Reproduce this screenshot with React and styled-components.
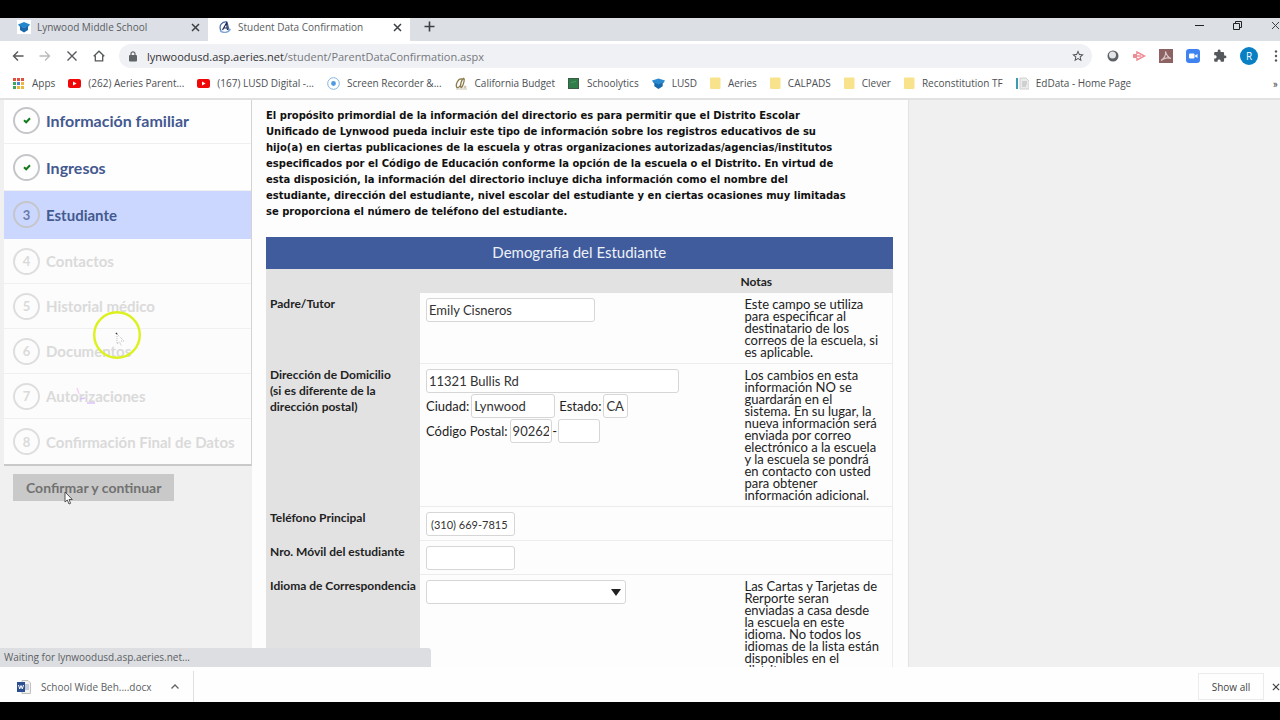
import React, { useState } from "react";
import styled, { createGlobalStyle } from "styled-components";
import { MdExtension, MdStarBorder } from "react-icons/md";

const bookmarks = [
  { icon: "apps", label: "Apps" },
  { icon: "youtube", label: "(262) Aeries Parent..." },
  { icon: "youtube", label: "(167) LUSD Digital -..." },
  { icon: "recorder", label: "Screen Recorder &..." },
  { icon: "budget", label: "California Budget" },
  { icon: "schoolytics", label: "Schoolytics" },
  { icon: "lusd", label: "LUSD" },
  { icon: "folder", label: "Aeries" },
  { icon: "folder", label: "CALPADS" },
  { icon: "folder", label: "Clever" },
  { icon: "folder", label: "Reconstitution TF" },
  { icon: "eddata", label: "EdData - Home Page" },
];

const steps = [
  { label: "Información familiar", status: "done" },
  { label: "Ingresos", status: "done" },
  { label: "Estudiante", status: "active" },
  { label: "Contactos", status: "pending" },
  { label: "Historial médico", status: "pending" },
  { label: "Documentos", status: "pending" },
  { label: "Autorizaciones", status: "pending" },
  { label: "Confirmación Final de Datos", status: "pending" },
];

const introLines = [
  "El propósito primordial de la información del directorio es para permitir que el Distrito Escolar",
  "Unificado de Lynwood pueda incluir este tipo de información sobre los registros educativos de su",
  "hijo(a) en ciertas publicaciones de la escuela y otras organizaciones autorizadas/agencias/institutos",
  "especificados por el Código de Educación conforme la opción de la escuela o el Distrito. En virtud de",
  "esta disposición, la información del directorio incluye dicha información como el nombre del",
  "estudiante, dirección del estudiante, nivel escolar del estudiante y en ciertas ocasiones muy limitadas",
  "se proporciona el número de teléfono del estudiante.",
];

const noteGuardian = [
  "Este campo se utiliza",
  "para especificar al",
  "destinatario de los",
  "correos de la escuela, si",
  "es aplicable.",
];
const noteAddress = [
  "Los cambios en esta",
  "información NO se",
  "guardarán en el",
  "sistema. En su lugar, la",
  "nueva información será",
  "enviada por correo",
  "electrónico a la escuela",
  "y la escuela se pondrá",
  "en contacto con usted",
  "para obtener",
  "información adicional.",
];
const noteLanguage = [
  "Las Cartas y Tarjetas de",
  "Rerporte seran",
  "enviadas a casa desde",
  "la escuela en este",
  "idioma. No todos los",
  "idiomas de la lista están",
  "disponibles en el",
  "distrito.",
];

const BookmarkIcon = ({ name }) => {
  switch (name) {
    case "apps":
      return (
        <svg width="13" height="13" viewBox="0 0 13 13">
          <g fill="#e0503f">
            <rect x="1" y="1" width="3" height="3" />
            <rect x="5" y="1" width="3" height="3" />
            <rect x="9" y="1" width="3" height="3" />
          </g>
          <rect x="1" y="5" width="3" height="3" fill="#3fa55b" />
          <rect x="5" y="5" width="3" height="3" fill="#4f83d8" />
          <rect x="9" y="5" width="3" height="3" fill="#e9b93b" />
          <rect x="1" y="9" width="3" height="3" fill="#3fa55b" />
          <rect x="5" y="9" width="3" height="3" fill="#e9b93b" />
          <rect x="9" y="9" width="3" height="3" fill="#e9b93b" />
        </svg>
      );
    case "youtube":
      return (
        <svg width="13" height="13" viewBox="0 0 13 13">
          <rect x="0" y="2" width="13" height="9" rx="2" fill="#f00808" />
          <path d="M5 4.5 8.6 6.5 5 8.5Z" fill="#fff" />
        </svg>
      );
    case "recorder":
      return (
        <svg width="13" height="13" viewBox="0 0 13 13">
          <circle cx="6.5" cy="6.5" r="5.8" fill="#fff" stroke="#85b4dc" />
          <circle cx="6.5" cy="6.5" r="2.4" fill="#4f9be3" />
        </svg>
      );
    case "budget":
      return (
        <svg width="13" height="13" viewBox="0 0 13 13" fill="none">
          <path
            d="M7 2C3 1 0 8 2 10.5c1 1 3-1 4-3M9 1C6 3 5 9 6 10.5S10 3 9 1.5 5 7 6 7"
            stroke="#8b7a4a"
            strokeWidth="1.3"
          />
          <path d="M1 12H12" stroke="#c9c3b0" />
          <circle cx="10" cy="10" r="1.5" fill="#cfc8b8" />
        </svg>
      );
    case "schoolytics":
      return (
        <svg width="12" height="13" viewBox="0 0 12 13">
          <rect x="0.5" y="1.5" width="10" height="10" fill="#2f7d4b" stroke="#3c5b46" />
          <path d="M3 5.5 8 4.500" stroke="#4d9a68" />
        </svg>
      );
    case "lusd":
      return (
        <svg width="13" height="13" viewBox="0 0 13 13">
          <path d="M0 3.5 6.5 1.500 13 3.5 11.500 6 6.500 7.500 1.500 6Z" fill="#2b8bd0" />
          <path d="M2.300 5.500 6.500 7.300 10.700 5.500V9.300L6.500 12 2.300 9.300Z" fill="#1769ad" />
        </svg>
      );
    case "eddata":
      return (
        <svg width="13" height="13" viewBox="0 0 13 13">
          <rect x="0" y="1" width="2" height="11" fill="#3b9bb3" />
          <path d="M4 1h6l3 3v8H4z" fill="#ececec" stroke="#d0d0d0" />
          <path d="M6 5h5M6 7h5M6 9h4" stroke="#b5b5b5" />
        </svg>
      );
    default:
      return (
        <svg width="11" height="13" viewBox="0 0 11 13">
          <path d="M1 .5h8.500a1 1 0 0 1 1 1V11a1 1 0 0 1-1 1H1a1 1 0 0 1-1-1V1.500a1 1 0 0 1 1-1Z" fill="#f8e38c" />
        </svg>
      );
  }
};

const CapIcon = () => (
  <svg width="14" height="14" viewBox="0 0 14 14">
    <rect width="14" height="14" fill="#fff" />
    <path d="M1 4.500 7 2 13 4.500 11.500 6.500 7 8 2.500 6.500Z" fill="#2487cc" />
    <path d="M3 6 7 8 11 6V10L7 12.500 3 10Z" fill="#1968ac" />
  </svg>
);

const AeriesIcon = () => (
  <svg width="13" height="12" viewBox="0 0 13 12" fill="none">
    <path d="M2 10C-1 4 4 0 8 1l2 8" stroke="#4468a8" strokeWidth="1.2" />
    <path d="M3.500 9 7.500 2 8.500 9M4.500 7h4" stroke="#1e2a55" strokeWidth="1.2" />
    <path d="M1 9.500C4 12.500 9 12 11.500 8" stroke="#7fa6d8" strokeWidth="1.5" />
  </svg>
);

const CloseIcon = ({ size = 9, weight = 1.5 }) => (
  <svg width={size} height={size} viewBox="0 0 9 9" stroke="#3c4043" strokeWidth={weight}>
    <path d="M1 1 8 8M8 1 1 8" />
  </svg>
);

const Cursor = () => (
  <svg width="9" height="14" viewBox="0 0 9 14">
    <path d="M1 1V11L3.300 9 5 13 6.600 12.300 5 8.500H8.300Z" fill="#fff" stroke="#444" strokeWidth="0.9" />
  </svg>
);

const NoteText = ({ lines }) => (
  <>
    {lines.map((line) => (
      <Line key={line}>{line}</Line>
    ))}
  </>
);

export default function App() {
  const [form, setForm] = useState({
    guardian: "Emily Cisneros",
    street: "11321 Bullis Rd",
    city: "Lynwood",
    state: "CA",
    zip: "90262",
    zipExt: "",
    phone: "(310) 669-7815",
    mobile: "",
    language: "",
  });
  const onChange = (e) => {
    setForm((prev) => ({ ...prev, [e.target.name]: e.target.value }));
  };

  return (
    <Frame>
      <GlobalStyle />
      <TabStrip>
        <Tab $first>
          <CapIcon />
          <TabTitle>Lynwood Middle School</TabTitle>
          <IconButton aria-label="Close tab">
            <CloseIcon />
          </IconButton>
        </Tab>
        <Tab $active>
          <AeriesIcon />
          <TabTitle>Student Data Confirmation</TabTitle>
          <IconButton aria-label="Close tab">
            <CloseIcon />
          </IconButton>
        </Tab>
        <NewTab aria-label="New tab">
          <svg width="11" height="11" viewBox="0 0 11 11" stroke="#3c4043" strokeWidth="1.6">
            <path d="M5.500 0.500V10.500M0.500 5.500H10.500" />
          </svg>
        </NewTab>
        <WindowButtons>
          <IconButton aria-label="Minimize">
            <svg width="9" height="9" viewBox="0 0 9 9" stroke="#222">
              <path d="M0 4.500H9" />
            </svg>
          </IconButton>
          <IconButton aria-label="Restore">
            <svg width="9" height="9" viewBox="0 0 9 9" stroke="#222" fill="none">
              <path d="M0.500 2.500h6v6h-6zM2.500 2V.5h6v6H7" />
            </svg>
          </IconButton>
          <IconButton aria-label="Close window">
            <CloseIcon weight={1} />
          </IconButton>
        </WindowButtons>
      </TabStrip>

      <Toolbar>
        <NavButtons>
          <IconButton aria-label="Back">
            <svg width="12" height="12" viewBox="0 0 12 12" fill="none" stroke="#55585c" strokeWidth="1.4">
              <path d="M11.500 6H1.500M6 1.500 1.500 6 6 10.500" />
            </svg>
          </IconButton>
          <IconButton aria-label="Forward">
            <svg width="12" height="12" viewBox="0 0 12 12" fill="none" stroke="#b9bbbe" strokeWidth="1.4">
              <path d="M.5 6h10M6 1.500 10.500 6 6 10.500" />
            </svg>
          </IconButton>
          <IconButton aria-label="Stop">
            <svg width="12" height="12" viewBox="0 0 12 12" stroke="#55585c" strokeWidth="1.4">
              <path d="M1.500 1.500 10.500 10.500M10.500 1.500 1.500 10.500" />
            </svg>
          </IconButton>
          <IconButton aria-label="Home">
            <svg width="12" height="12" viewBox="0 0 12 12" fill="none" stroke="#55585c" strokeWidth="1.3">
              <path d="M.7 6.200 6 1.200 11.300 6.200M2.300 5.500V10.800H9.700V5.500" />
            </svg>
          </IconButton>
        </NavButtons>
        <AddressBar>
          <svg width="8" height="11" viewBox="0 0 8 11">
            <rect x="0" y="4" width="8" height="6.5" rx="1" fill="#5f6368" />
            <path d="M2 4.500V2.800a2 2 0 0 1 4 0V4.500" fill="none" stroke="#5f6368" strokeWidth="1.2" />
          </svg>
          <Url>
            <b>lynwoodusd.asp.aeries.net</b>/student/ParentDataConfirmation.aspx
          </Url>
          <IconButton aria-label="Bookmark this page">
            <MdStarBorder size={14} color="#4d5156" />
          </IconButton>
        </AddressBar>
        <Extensions>
          <svg width="12" height="12" viewBox="0 0 12 12">
            <circle cx="6" cy="6" r="5.5" fill="#5d6064" />
            <circle cx="5.5" cy="5" r="3.5" fill="#e3e5e8" />
          </svg>
          <svg width="14" height="12" viewBox="0 0 14 12" fill="none" stroke="#f08a92" strokeWidth="1.5">
            <path d="M5 4V2L12.500 6 5 10V8" />
            <rect x="1" y="4" width="4" height="4" fill="#f08a92" stroke="none" />
            <path d="M5 6H9" />
          </svg>
          <svg width="14" height="14" viewBox="0 0 14 14">
            <rect width="14" height="14" fill="#8c6263" />
            <path
              d="M6.500 2.500C7.500 6 9 8.500 12 9.500 8 8 5 9 2 11.500 5 9.500 7 6 6.500 2.500Z"
              fill="none"
              stroke="#dcc6c6"
              strokeWidth="1.1"
            />
          </svg>
          <svg width="14" height="14" viewBox="0 0 14 14">
            <rect width="14" height="14" rx="3" fill="#3f83f1" />
            <rect x="3" y="4.5" width="5.5" height="5" rx="1" fill="#fff" />
            <path d="M9 6.500 11.500 5V9L9 7.500Z" fill="#fff" />
          </svg>
          <MdExtension size={14} color="#54585c" />
          <Avatar>R</Avatar>
          <svg width="4" height="12" viewBox="0 0 4 12" fill="#54585c">
            <circle cx="2" cy="1.5" r="1.2" />
            <circle cx="2" cy="6" r="1.2" />
            <circle cx="2" cy="10.5" r="1.2" />
          </svg>
        </Extensions>
      </Toolbar>

      <BookmarkBar>
        {bookmarks.map((bookmark) => (
          <Bookmark href="#" key={bookmark.label}>
            <BookmarkIcon name={bookmark.icon} />
            {bookmark.label}
          </Bookmark>
        ))}
        <More aria-label="More bookmarks">»</More>
      </BookmarkBar>

      <Page>
        <Sidebar>
          <Steps>
            {steps.map((step, i) => (
              <Step key={step.label} href="#" $status={step.status}>
                <StepBadge $status={step.status}>
                  {step.status === "done" ? (
                    <svg width="8" height="7" viewBox="0 0 8 7" fill="none" stroke="#157a1c" strokeWidth="2">
                      <path d="M1 3.200 3.200 5.300 7 1.300" />
                    </svg>
                  ) : (
                    i + 1
                  )}
                </StepBadge>
                {step.label}
              </Step>
            ))}
            <ClickRing>
              <svg width="48" height="48" viewBox="0 0 48 48" fill="none">
                <circle cx="24" cy="24" r="22.8" stroke="#dcf11e" strokeWidth="2.4" />
                <path d="M23 22l1 1" stroke="#333" strokeWidth="1.5" />
                <path d="M24 23V33L26.500 31 28.500 35M24 23 31 30H27.500" stroke="#bbb" strokeDasharray="1 1" />
              </svg>
            </ClickRing>
            <Spark>
              <svg width="30" height="20" viewBox="0 0 30 20" fill="none">
                <path d="M2 3 4 9" stroke="#f6d3f3" strokeWidth="1.5" />
                <path d="M5 14 10 13M12 18H20" stroke="#d9c2fb" strokeWidth="1.5" />
              </svg>
            </Spark>
          </Steps>
          <ConfirmButton>
            Confirmar y continuar
            <Pointer>
              <Cursor />
            </Pointer>
          </ConfirmButton>
        </Sidebar>

        <Main>
          <Intro>
            {introLines.map((line) => (
              <Line key={line}>{line}</Line>
            ))}
          </Intro>
          <FormTable>
            <colgroup>
              <LabelCol />
              <FieldCol />
              <NotesCol />
            </colgroup>
            <thead>
              <tr>
                <TableTitle colSpan={3}>Demografía del Estudiante</TableTitle>
              </tr>
              <tr>
                <SubHead colSpan={2} />
                <SubHead>Notas</SubHead>
              </tr>
            </thead>
            <tbody>
              <tr>
                <LabelCell>
                  <label htmlFor="guardian">Padre/Tutor</label>
                </LabelCell>
                <FieldCell>
                  <Field id="guardian" name="guardian" $width={169} value={form.guardian} onChange={onChange} />
                </FieldCell>
                <NoteCell>
                  <NoteText lines={noteGuardian} />
                </NoteCell>
              </tr>
              <tr>
                <LabelCell>
                  <label htmlFor="street">
                    Dirección de Domicilio
                    <br />
                    (si es diferente de la
                    <br />
                    dirección postal)
                  </label>
                </LabelCell>
                <FieldCell>
                  <FieldLine>
                    <Field id="street" name="street" $width={253} value={form.street} onChange={onChange} />
                  </FieldLine>
                  <FieldLine>
                    <InlineLabel htmlFor="city">Ciudad:</InlineLabel>
                    <Field id="city" name="city" $width={84} value={form.city} onChange={onChange} />
                    <InlineLabel $next htmlFor="state">
                      Estado:
                    </InlineLabel>
                    <Field id="state" name="state" $width={25} value={form.state} onChange={onChange} />
                  </FieldLine>
                  <FieldLine>
                    <InlineLabel htmlFor="zip">Código Postal:</InlineLabel>
                    <Field id="zip" name="zip" $width={42} value={form.zip} onChange={onChange} />
                    <Dash>-</Dash>
                    <Field
                      name="zipExt"
                      aria-label="Código Postal +4"
                      $width={42}
                      value={form.zipExt}
                      onChange={onChange}
                    />
                  </FieldLine>
                </FieldCell>
                <NoteCell>
                  <NoteText lines={noteAddress} />
                </NoteCell>
              </tr>
              <tr>
                <LabelCell>
                  <label htmlFor="phone">Teléfono Principal</label>
                </LabelCell>
                <FieldCell>
                  <Field id="phone" name="phone" $small $width={89} value={form.phone} onChange={onChange} />
                </FieldCell>
                <NoteCell />
              </tr>
              <tr>
                <LabelCell>
                  <label htmlFor="mobile">Nro. Móvil del estudiante</label>
                </LabelCell>
                <FieldCell>
                  <Field id="mobile" name="mobile" $small $width={89} value={form.mobile} onChange={onChange} />
                </FieldCell>
                <NoteCell />
              </tr>
              <tr>
                <LabelCell>
                  <label htmlFor="language">Idioma de Correspondencia</label>
                </LabelCell>
                <FieldCell>
                  <SelectWrap>
                    <Select id="language" name="language" value={form.language} onChange={onChange}>
                      <option value=""></option>
                    </Select>
                    <SelectArrow width="10" height="7" viewBox="0 0 10 7">
                      <path d="M0 0H10L5 7Z" fill="#222" />
                    </SelectArrow>
                  </SelectWrap>
                </FieldCell>
                <NoteCell>
                  <NoteText lines={noteLanguage} />
                </NoteCell>
              </tr>
            </tbody>
          </FormTable>
        </Main>
        <StatusBubble>Waiting for lynwoodusd.asp.aeries.net...</StatusBubble>
      </Page>

      <DownloadBar>
        <Download>
          <svg width="14" height="14" viewBox="0 0 14 14">
            <path d="M5 .5h6l2.500 2.500v10.500H5z" fill="#f2f2f2" stroke="#c0c0c0" />
            <path d="M8 5h4M8 7h4M8 9h4" stroke="#9aa7bd" />
            <rect y="2" width="8" height="10" fill="#2b4f92" />
            <path d="M1.500 5 2.700 9 4 5.500 5.300 9 6.500 5" fill="none" stroke="#fff" />
          </svg>
          <DownloadName>School Wide Beh....docx</DownloadName>
          <IconButton aria-label="Download options">
            <svg width="8" height="5" viewBox="0 0 8 5" fill="none" stroke="#5f6368" strokeWidth="1.3">
              <path d="M.5 4.500 4 1 7.500 4.500" />
            </svg>
          </IconButton>
        </Download>
        <ShowAll>Show all</ShowAll>
        <IconButton aria-label="Close downloads">
          <CloseIcon size={8} weight={1.3} />
        </IconButton>
      </DownloadBar>
    </Frame>
  );
}

const GlobalStyle = createGlobalStyle`
  * {
    box-sizing: border-box;
  }
  body {
    margin: 0;
    background: #000;
    font-family: Lato, "Liberation Sans", sans-serif;
    color: #222;
  }
  button {
    font-family: inherit;
    border: 0;
    padding: 0;
    background: none;
  }
  svg {
    display: block;
    flex-shrink: 0;
  }
`;

const uiFont = `"Open Sans", "Noto Sans", sans-serif`;

const Frame = styled.div`
  display: flex;
  flex-direction: column;
  height: 100vh;
  padding: 18px 0;
  overflow: hidden;
`;

const TabStrip = styled.div`
  display: flex;
  flex-shrink: 0;
  height: 23px;
  background: #dcdfe3;
  font-family: ${uiFont};
  font-size: 10px;
  color: #5a5d61;
`;

const Tab = styled.div`
  display: flex;
  align-items: center;
  gap: 6px;
  width: ${(props) => (props.$first ? "208px" : "202px")};
  padding: 0 8px 5px ${(props) => (props.$first ? "17px" : "11px")};
  background: ${(props) => (props.$active ? "#fff" : "#dcdfe6")};
`;

const TabTitle = styled.span`
  flex: 1;
  white-space: nowrap;
`;

const IconButton = styled.button`
  display: flex;
  align-items: center;
  justify-content: center;
`;

const NewTab = styled(IconButton)`
  width: 38px;
  padding-bottom: 6px;
`;

const WindowButtons = styled.div`
  display: flex;
  align-items: center;
  gap: 29px;
  margin-left: auto;
  padding-bottom: 9px;
`;

const Toolbar = styled.div`
  display: flex;
  align-items: center;
  flex-shrink: 0;
  height: 31px;
  padding-bottom: 1px;
  background: #fff;
`;

const NavButtons = styled.div`
  display: flex;
  gap: 15px;
  padding: 0 14px 0 12px;
`;

const AddressBar = styled.div`
  display: flex;
  align-items: center;
  flex: 1;
  gap: 10px;
  height: 24px;
  padding: 0 7px 0 10px;
  border-radius: 12px;
  background: #f0f1f5;
`;

const Url = styled.span`
  flex: 1;
  font-family: ${uiFont};
  font-size: 11px;
  color: #74777b;

  b {
    font-weight: 400;
    color: #333;
  }
`;

const Extensions = styled.div`
  display: flex;
  align-items: center;
  gap: 13px;
  padding: 0 2px 0 15px;
`;

const Avatar = styled.span`
  width: 18px;
  height: 18px;
  margin-right: 3px;
  border-radius: 50%;
  background: #0a80c4;
  color: #fff;
  font-family: ${uiFont};
  font-size: 10px;
  line-height: 18px;
  text-align: center;
`;

const BookmarkBar = styled.nav`
  display: flex;
  align-items: center;
  flex-shrink: 0;
  gap: 13px;
  height: 28px;
  padding: 0 2px 4px 12px;
  border-bottom: 2px solid #e1e1e1;
  background: #fff;
`;

const Bookmark = styled.a`
  display: flex;
  align-items: center;
  gap: 7px;
  font-family: ${uiFont};
  font-size: 10px;
  color: #4d5054;
  text-decoration: none;
  white-space: nowrap;
`;

const More = styled.button`
  margin-left: auto;
  font-size: 12px;
  color: #444;
`;

const Page = styled.div`
  position: relative;
  display: flex;
  flex: 1;
  min-height: 0;
  background: #f0f0f0;
`;

const Sidebar = styled.aside`
  flex: 0 0 252px;
  min-width: 0;
  height: 100%;
  padding-left: 4px;
  overflow: hidden;
`;

const Steps = styled.nav`
  position: relative;
  margin-top: -3px;
  background: #fcfcfc;
  border-right: 1px solid #d3d3d3;
  border-bottom: 2px solid #c9c9c9;
`;

const stepColors = { done: "#43598f", active: "#43598f", pending: "#dadada" };
const stepBackgrounds = { done: "#fefefe", active: "#cbd7fe", pending: "#fcfcfc" };
const stepHeights = { done: "47px", active: "48px", pending: "45px" };

const Step = styled.a`
  display: flex;
  align-items: center;
  gap: 6px;
  height: ${(props) => stepHeights[props.$status]};
  padding-left: 9px;
  border-bottom: 1px solid ${(props) => (props.$status === "active" ? "#cbd7fe" : "#f0f0f0")};
  background: ${(props) => stepBackgrounds[props.$status]};
  color: ${(props) => stepColors[props.$status]};
  font-size: ${(props) => (props.$status === "done" ? "16px" : "15px")};
  font-weight: 700;
  text-decoration: none;
  white-space: nowrap;

  &:last-of-type {
    border-bottom: 0;
  }
`;

const StepBadge = styled.span`
  display: flex;
  align-items: center;
  justify-content: center;
  width: 27px;
  height: 27px;
  border: 2px solid ${(props) => (props.$status === "pending" ? "#dedede" : "#c4c6c9")};
  border-radius: 50%;
  color: ${(props) => (props.$status === "active" ? "#6b7ba8" : "#dadada")};
  font-size: 13px;
`;

const ClickRing = styled.span`
  position: absolute;
  left: 89px;
  top: 214px;
`;

const Spark = styled.span`
  position: absolute;
  left: 71px;
  top: 288px;
`;

const ConfirmButton = styled.button`
  position: relative;
  margin: 8px 0 0 9px;
  padding: 0 13px;
  height: 27px;
  background: #c9c9c9;
  color: #717171;
  font-size: 14px;
  font-weight: 700;
`;

const Pointer = styled.span`
  position: absolute;
  left: 51px;
  top: 17px;
`;

const Main = styled.main`
  flex: 0 1 657px;
  height: 100%;
  padding: 8px 15px 0 14px;
  overflow: hidden;
  background: #fdfdfd;
  border-right: 1px solid #e2e2e2;
`;

const Intro = styled.p`
  margin: 0 0 17px;
  font-family: "DejaVu Sans", Verdana, sans-serif;
  font-size: 10px;
  font-weight: 700;
  line-height: 16px;
  color: #111;
`;

const Line = styled.span`
  display: block;
  white-space: nowrap;
`;

const FormTable = styled.table`
  width: 100%;
  table-layout: fixed;
  border-collapse: collapse;
  font-size: 13px;
`;

const LabelCol = styled.col`
  width: 154px;
`;
const FieldCol = styled.col``;
const NotesCol = styled.col`
  width: 152px;
`;

const TableTitle = styled.th`
  height: 32px;
  padding: 0 0 2px;
  background: #405c9d;
  color: #eef1f8;
  font-size: 15px;
  font-weight: 400;
`;

const SubHead = styled.th`
  height: 24px;
  padding: 0;
  background: #e2e2e3;
  font-size: 12px;
  text-align: left;
`;

const LabelCell = styled.th`
  padding: 3px 0 3px 4px;
  background: #e2e2e2;
  font-size: 12px;
  line-height: 16px;
  text-align: left;
  vertical-align: top;
  white-space: nowrap;
`;

const FieldCell = styled.td`
  padding: 5px 6px 4px;
  border-bottom: 1px solid #ececec;
  vertical-align: top;
`;

const NoteCell = styled.td`
  padding: 5px 0 5px 4px;
  border-bottom: 1px solid #ececec;
  border-right: 1px solid #ececec;
  font-size: 13px;
  line-height: 12px;
  vertical-align: top;
`;

const FieldLine = styled.div`
  display: flex;
  height: 25px;
  line-height: 24px;
`;

const InlineLabel = styled.label`
  margin: 0 2px 0 ${(props) => (props.$next ? "4px" : "0")};
`;

const Dash = styled.span`
  width: 6px;
  text-align: center;
`;

const Field = styled.input`
  display: block;
  width: ${(props) => props.$width}px;
  height: 24px;
  padding: 0 ${(props) => (props.$small ? "4px" : "2px")};
  border: 1px solid #d6d6d6;
  border-radius: 3px;
  background: #fff;
  color: #333;
  font-family: inherit;
  font-size: ${(props) => (props.$small ? "11px" : "13px")};
`;

const SelectWrap = styled.div`
  position: relative;
  width: 200px;
`;

const Select = styled.select`
  display: block;
  width: 100%;
  height: 24px;
  border: 1px solid #d6d6d6;
  border-radius: 3px;
  background: #fff;
  appearance: none;
`;

const SelectArrow = styled.svg`
  position: absolute;
  right: 5px;
  top: 9px;
  pointer-events: none;
`;

const StatusBubble = styled.div`
  position: absolute;
  left: 0;
  bottom: 0;
  width: 431px;
  height: 19px;
  padding-left: 4px;
  border-top-right-radius: 3px;
  background: #dcdee2;
  color: #5c5f63;
  font-family: ${uiFont};
  font-size: 10px;
  line-height: 19px;
`;

const DownloadBar = styled.footer`
  display: flex;
  align-items: center;
  flex-shrink: 0;
  height: 35px;
  padding-top: 4px;
  background: #fefefe;
  font-family: ${uiFont};
  font-size: 10px;
  color: #5c5f63;
`;

const Download = styled.div`
  display: flex;
  align-items: center;
  align-self: stretch;
  width: 194px;
  padding: 0 14px 0 17px;
  gap: 10px;
  border-right: 1px solid #e0e0e0;
`;

const DownloadName = styled.span`
  flex: 1;
  white-space: nowrap;
`;

const ShowAll = styled.button`
  width: 66px;
  height: 27px;
  margin: 0 8px 0 auto;
  border: 1px solid #ebebeb;
  color: #444;
  font-size: 10px;
`;
